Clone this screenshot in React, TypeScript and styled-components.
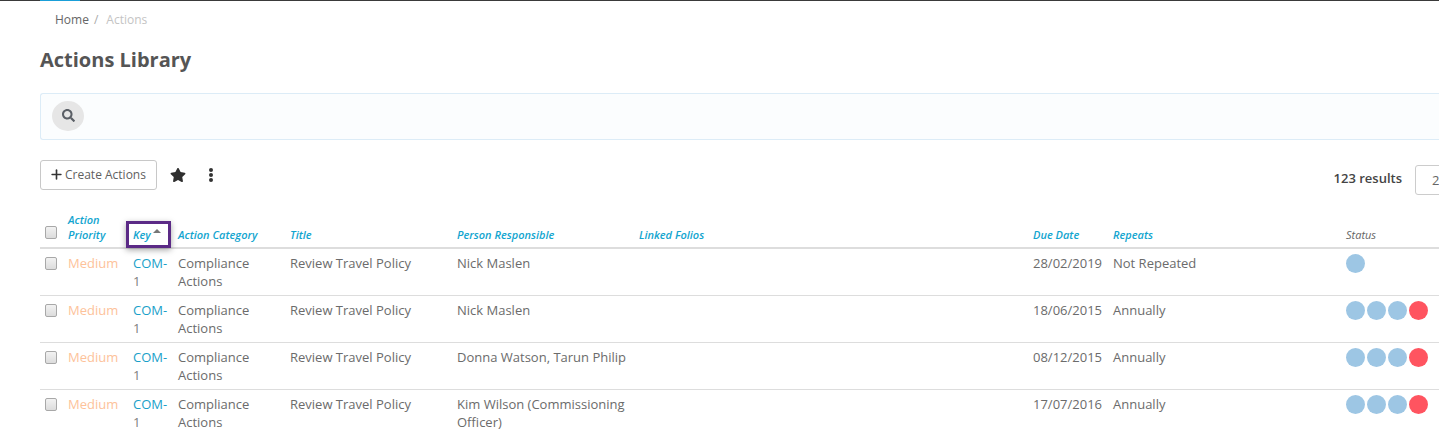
import React from "react";
import styled, { createGlobalStyle } from "styled-components";
import { FaSearch, FaStar } from "react-icons/fa";
import { Plus } from "lucide-react";

const GlobalStyle = createGlobalStyle`
  html, body {
    margin: 0;
    padding: 0;
    background: #fff;
    overflow: hidden;
    font-family: "Open Sans", "Liberation Sans", sans-serif;
    color: #555;
  }
`;

type Row = {
  date: string;
  repeats: string;
  person: string;
  dots: string[];
};

const BLUE = "#9dc6e4";
const RED = "#ff5460";

const rows: Row[] = [
  { date: "28/02/2019", repeats: "Not Repeated", person: "Nick Maslen", dots: [BLUE] },
  { date: "18/06/2015", repeats: "Annually", person: "Nick Maslen", dots: [BLUE, BLUE, BLUE, RED] },
  { date: "08/12/2015", repeats: "Annually", person: "Donna Watson, Tarun Philip", dots: [BLUE, BLUE, BLUE, RED] },
  { date: "17/07/2016", repeats: "Annually", person: "Kim Wilson (Commissioning Officer)", dots: [BLUE, BLUE, BLUE, RED] },
];

const App: React.FC = () => {
  return (
    <Page>
      <GlobalStyle />
      <TopBar>
        <TopBarAccent />
      </TopBar>
      <Content>
        <Breadcrumb>
          <span>Home</span>
          <Sep>/</Sep>
          <Current>Actions</Current>
        </Breadcrumb>
        <Heading>Actions Library</Heading>
        <SearchPanel>
          <SearchButton>
            <FaSearch size={13} />
          </SearchButton>
        </SearchPanel>
        <Toolbar>
          <CreateButton>
            <Plus size={15} strokeWidth={2.6} />
            Create Actions
          </CreateButton>
          <StarIcon>
            <FaStar size={16} />
          </StarIcon>
          <Kebab>
            <i />
            <i />
            <i />
          </Kebab>
          <Results>123 results</Results>
          <PageSelect>2</PageSelect>
        </Toolbar>
        <HeaderRow>
          <Check />
          <HeadCell>
            Action
            <br />
            Priority
          </HeadCell>
          <KeyHead>
            Key
            <SortCaret />
          </KeyHead>
          <HeadCell>Action Category</HeadCell>
          <HeadCell>Title</HeadCell>
          <HeadCell>Person Responsible</HeadCell>
          <HeadCell>Linked Folios</HeadCell>
          <HeadCell>Due Date</HeadCell>
          <HeadCell>Repeats</HeadCell>
          <StatusHead>Status</StatusHead>
        </HeaderRow>
        {rows.map((row) => (
          <BodyRow key={row.date}>
            <Check />
            <Priority>Medium</Priority>
            <KeyCell>
              <span>COM-</span>
              <br />
              <KeyNum>1</KeyNum>
            </KeyCell>
            <Cell>Compliance Actions</Cell>
            <Cell>Review Travel Policy</Cell>
            <Cell>{row.person}</Cell>
            <Cell />
            <Cell>{row.date}</Cell>
            <Cell>{row.repeats}</Cell>
            <Dots>
              {row.dots.map((color, i) => (
                <Dot key={i} $color={color} />
              ))}
            </Dots>
          </BodyRow>
        ))}
      </Content>
    </Page>
  );
};

export default App;

const COLUMNS = "28px 65px 45px 112px 167px 182px 394px 80px 233px 93px";

const Page = styled.div`
  width: 1439px;
  height: 432px;
  overflow: hidden;
`;

const TopBar = styled.div`
  height: 1px;
  background: #3a3a3a;
`;

const TopBarAccent = styled.div`
  width: 40px;
  height: 1px;
  margin-left: 40px;
  background: #1a9fd8;
`;

const Content = styled.div`
  padding-left: 40px;
  width: 1399px;
`;

const Breadcrumb = styled.div`
  display: flex;
  padding: 11px 0 0 15px;
  font-size: 12px;
  line-height: 16px;
  color: #666;
`;

const Sep = styled.span`
  margin: 0 8px 0 5px;
  color: #aaa;
`;

const Current = styled.span`
  color: #c4c4c4;
`;

const Heading = styled.h1`
  margin: 18px 0 0;
  font-size: 20px;
  line-height: 27px;
  font-weight: 700;
  color: #555;
`;

const SearchPanel = styled.div`
  display: flex;
  align-items: center;
  box-sizing: border-box;
  height: 47px;
  margin-top: 20px;
  padding: 0 0 2px 11px;
  background: #fbfdfe;
  border: 1px solid #dcecf7;
  border-right: none;
  border-radius: 3px 0 0 3px;
`;

const SearchButton = styled.div`
  display: flex;
  align-items: center;
  justify-content: center;
  width: 32px;
  height: 30px;
  border-radius: 50%;
  background: #e6e6e6;
  color: #5a5f66;
`;

const Toolbar = styled.div`
  display: flex;
  align-items: flex-start;
  height: 30px;
  margin-top: 20px;
`;

const CreateButton = styled.div`
  display: flex;
  align-items: center;
  gap: 1px;
  box-sizing: border-box;
  width: 117px;
  height: 30px;
  padding: 0 0 2px 8px;
  border: 1px solid #c8c8c8;
  border-radius: 3px;
  font-size: 12px;
  color: #5f5f5f;
  svg {
    color: #333;
  }
`;

const StarIcon = styled.div`
  display: flex;
  margin: 7px 0 0 13px;
  color: #2f2f2f;
`;

const Kebab = styled.div`
  display: flex;
  flex-direction: column;
  gap: 1px;
  margin: 8px 0 0 23px;
  i {
    width: 4px;
    height: 4px;
    border-radius: 50%;
    background: #333;
  }
`;

const Results = styled.div`
  margin: 9px 0 0 auto;
  font-size: 13px;
  line-height: 18px;
  font-weight: 600;
  color: #444;
`;

const PageSelect = styled.div`
  box-sizing: border-box;
  flex: none;
  width: 60px;
  height: 30px;
  margin: 5px -36px 0 13px;
  padding-left: 16px;
  border: 1px solid #ccc;
  border-radius: 3px;
  font-size: 13px;
  line-height: 28px;
  color: #666;
`;

const HeaderRow = styled.div`
  display: grid;
  grid-template-columns: ${COLUMNS};
  align-items: end;
  box-sizing: border-box;
  width: 1399px;
  height: 47px;
  margin-top: 12px;
  padding: 0 0 5px;
  border-bottom: 2px solid #ddd;
`;

const BodyRow = styled.div`
  display: grid;
  grid-template-columns: ${COLUMNS};
  align-items: start;
  box-sizing: border-box;
  width: 1399px;
  height: 47px;
  padding-top: 5px;
  border-bottom: 1px solid #ddd;
`;

const Check = styled.span`
  display: block;
  box-sizing: border-box;
  width: 12px;
  height: 13px;
  margin: 3px 0 3px 5px;
  border: 1px solid #a8a8a8;
  border-radius: 2px;
  background: linear-gradient(#f2f2f2, #dcdcdc);
`;

const HeadCell = styled.div`
  font-size: 11px;
  line-height: 15px;
  font-style: italic;
  font-weight: 600;
  color: #12a5cf;
`;

const KeyHead = styled(HeadCell)`
  position: relative;
`;

const SortCaret = styled.span`
  position: absolute;
  left: 20px;
  top: 2px;
  width: 0;
  height: 0;
  border-left: 4px solid transparent;
  border-right: 4px solid transparent;
  border-bottom: 4px solid #777;
  &::after {
    content: "";
    position: absolute;
    left: -31px;
    top: -8px;
    width: 39px;
    height: 21px;
    border: 3px solid #5b2a86;
    box-shadow: 0 2px 6px rgba(0, 0, 0, 0.35);
  }
`;

const StatusHead = styled.div`
  font-size: 11px;
  line-height: 15px;
  font-style: italic;
  color: #666;
`;

const Cell = styled.div`
  font-size: 13px;
  line-height: 18px;
  color: #6b6b6b;
  padding-right: 8px;
`;

const Priority = styled(Cell)`
  color: #fdc29a;
`;

const KeyCell = styled(Cell)`
  color: #1a9fc9;
`;

const KeyNum = styled.span`
  color: #808080;
`;

const Dots = styled.div`
  display: flex;
  gap: 2px;
`;

const Dot = styled.span<{ $color: string }>`
  width: 19px;
  height: 19px;
  border-radius: 50%;
  background: ${(p) => p.$color};
`;
